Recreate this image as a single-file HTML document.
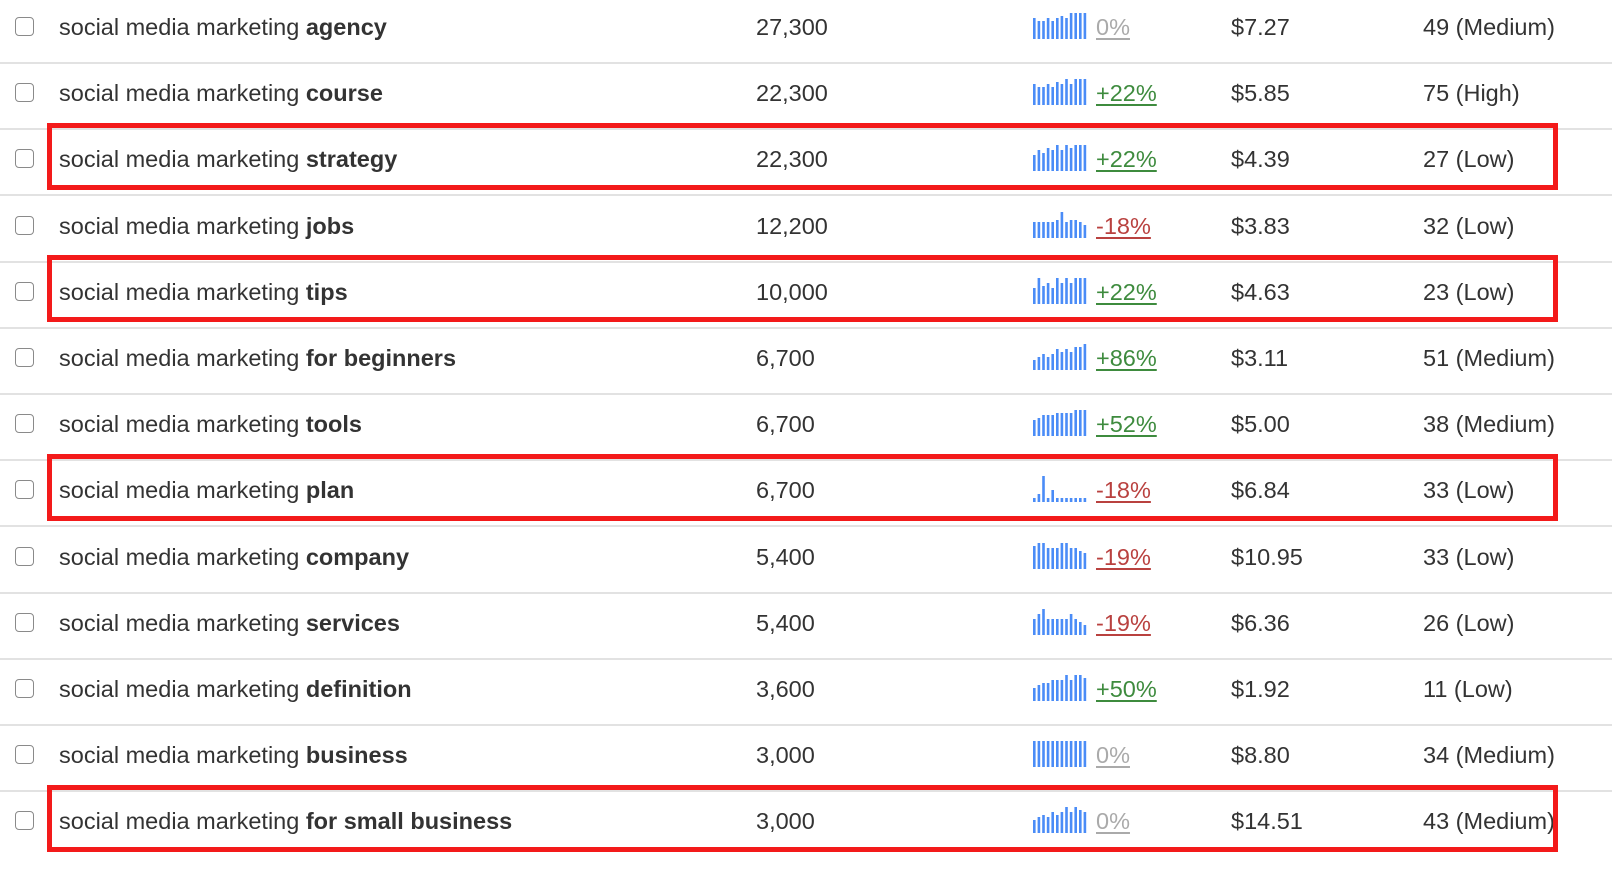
<!DOCTYPE html>
<html><head><meta charset="utf-8"><style>
body{margin:0;width:1612px;height:872px;background:#fff;position:relative;overflow:hidden;font-family:"Liberation Sans",Arial,sans-serif;color:#333;font-size:23.5px}
.r{position:absolute;left:0;width:1612px;height:30px}
.cb{position:absolute;left:15px;top:5px;width:17px;height:17px;border:1.5px solid #8a8a8a;border-radius:4px;background:#fff}
.t{position:absolute;top:0;line-height:30px;white-space:nowrap}
.k{left:59px}.v{left:756px}.p{left:1096px;text-decoration:underline;text-underline-offset:3px;text-decoration-thickness:2px}
.c{left:1231px}.m{left:1423px}
.g{color:#3e8b3e}.d{color:#b9413f}.z{color:#aaa}
.sp{position:absolute;left:1033px;top:1px}
.hr{position:absolute;left:0;width:1612px;height:2px;background:#e2e2e2}
.box{position:absolute;left:47px;width:1501px;height:57px;border:5px solid #f31a1a}
</style></head><body>
<div id="c"></div>
<script>
var rows=[
["agency","27,300","0%","z","$7.27","49 (Medium)",[.8,.7,.7,.8,.7,.8,.9,.8,1,1,1,1]],
["course","22,300","+22%","g","$5.85","75 (High)",[.8,.7,.7,.8,.7,.9,.8,1,.8,1,1,1]],
["strategy","22,300","+22%","g","$4.39","27 (Low)",[.6,.8,.7,.9,.8,1,.8,1,.9,1,1,1]],
["jobs","12,200","-18%","d","$3.83","32 (Low)",[.6,.6,.6,.6,.6,.7,1,.6,.7,.7,.6,.5]],
["tips","10,000","+22%","g","$4.63","23 (Low)",[.6,1,.7,.8,.6,1,.8,1,.8,1,1,1]],
["for beginners","6,700","+86%","g","$3.11","51 (Medium)",[.4,.5,.6,.5,.6,.8,.7,.8,.7,.9,.9,1]],
["tools","6,700","+52%","g","$5.00","38 (Medium)",[.6,.7,.8,.8,.8,.9,.9,.9,.9,1,1,1]],
["plan","6,700","-18%","d","$6.84","33 (Low)",[.15,.3,1,.15,.45,.15,.15,.15,.15,.15,.15,.15]],
["company","5,400","-19%","d","$10.95","33 (Low)",[.9,1,1,.8,.8,.8,1,1,.8,.8,.7,.6]],
["services","5,400","-19%","d","$6.36","26 (Low)",[.6,.8,1,.6,.6,.6,.6,.6,.8,.6,.5,.4]],
["definition","3,600","+50%","g","$1.92","11 (Low)",[.5,.6,.7,.7,.8,.8,.8,1,.8,1,1,.9]],
["business","3,000","0%","z","$8.80","34 (Medium)",[1,1,1,1,1,1,1,1,1,1,1,1]],
["for small business","3,000","0%","z","$14.51","43 (Medium)",[.5,.6,.7,.6,.8,.7,.8,1,.8,1,.9,.8]]];
var h="";
rows.forEach(function(r,i){
 var cy=27+66.2*i, top=cy-15;
 var bars="";
 r[6].forEach(function(v,j){var bh=Math.round(26*v);bars+='<rect x="'+(j*4.6)+'" y="'+(26-bh)+'" width="2.6" height="'+bh+'" fill="#4a8cf7"/>';});
 h+='<div class="r" style="top:'+top+'px"><div class="cb"></div><div class="t k">social media marketing <b>'+r[0]+'</b></div><div class="t v">'+r[1]+'</div><svg class="sp" width="56" height="27">'+bars+'</svg><div class="t p '+r[3]+'">'+r[2]+'</div><div class="t c">'+r[4]+'</div><div class="t m">'+r[5]+'</div></div>';
 if(i<12)h+='<div class="hr" style="top:'+Math.round(62+66.2*i)+'px"></div>';
});
[2,4,7,12].forEach(function(i){h+='<div class="box" style="top:'+Math.round(123+66.2*(i-2))+'px"></div>';});
document.getElementById("c").innerHTML=h;
</script>
</body></html>
